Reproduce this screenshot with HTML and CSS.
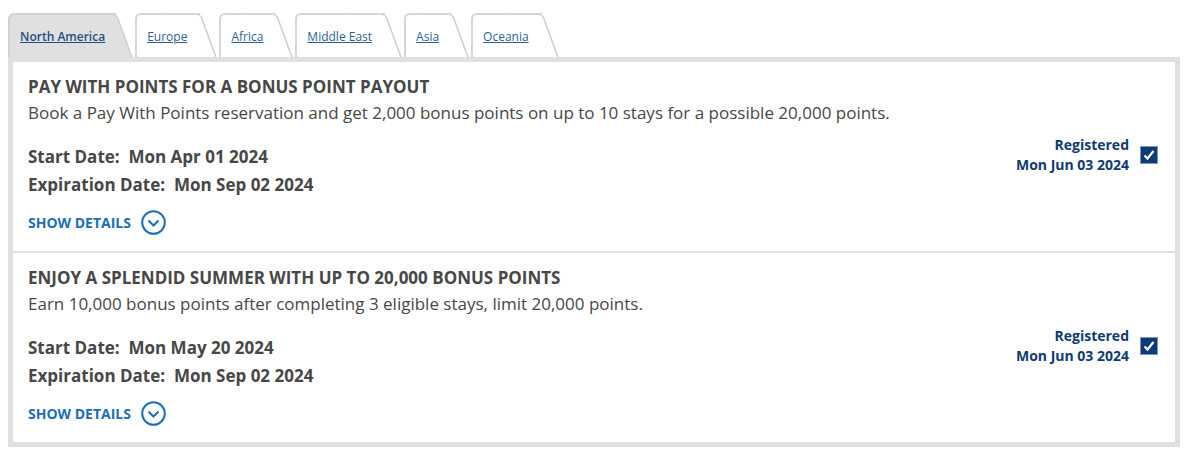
FILE: index.html
```html
<!DOCTYPE html>
<html lang="en">
<head>
    <meta charset="UTF-8">
    <meta name="viewport" content="width=device-width, initial-scale=1.0">
    <link rel="stylesheet" href="styles.css">
    <title>Offers</title>
</head>
<body>
    <div class="region-tabs">
        <a href="#" class="tab active">North America</a>
        <a href="#" class="tab">Europe</a>
        <a href="#" class="tab">Africa</a>
        <a href="#" class="tab">Middle East</a>
        <a href="#" class="tab">Asia</a>
        <a href="#" class="tab">Oceania</a>
    </div>
    <div class="offer-list">
        <div class="offer">
            <div class="offer-info">
                <h3>PAY WITH POINTS FOR A BONUS POINT PAYOUT</h3>
                <p>Book a Pay With Points reservation and get 2,000 bonus points on up to 10 stays for a possible 20,000 points.</p>
                <div class="dates">
                    <div>Start Date:&nbsp; Mon Apr 01 2024</div>
                    <div>Expiration Date:&nbsp; Mon Sep 02 2024</div>
                </div>
                <a href="#" class="show-details">SHOW DETAILS
                    <svg width="25" height="25" viewBox="0 0 25 25"><circle cx="12.5" cy="12.5" r="11.3" fill="none" stroke="#1a6fb8" stroke-width="2"/><polyline points="7.5,10.5 12.5,15.5 17.5,10.5" fill="none" stroke="#1a6fb8" stroke-width="2"/></svg>
                </a>
            </div>
            <div class="registered">
                <div class="reg-text">Registered<br>Mon Jun 03 2024</div>
                <span class="check"><svg width="12" height="12" viewBox="0 0 12 12"><polyline points="1.5,6.5 4.5,9.5 10.5,2" fill="none" stroke="#fff" stroke-width="2.2"/></svg></span>
            </div>
        </div>
        <div class="offer">
            <div class="offer-info">
                <h3>ENJOY A SPLENDID SUMMER WITH UP TO 20,000 BONUS POINTS</h3>
                <p>Earn 10,000 bonus points after completing 3 eligible stays, limit 20,000 points.</p>
                <div class="dates">
                    <div>Start Date:&nbsp; Mon May 20 2024</div>
                    <div>Expiration Date:&nbsp; Mon Sep 02 2024</div>
                </div>
                <a href="#" class="show-details">SHOW DETAILS
                    <svg width="25" height="25" viewBox="0 0 25 25"><circle cx="12.5" cy="12.5" r="11.3" fill="none" stroke="#1a6fb8" stroke-width="2"/><polyline points="7.5,10.5 12.5,15.5 17.5,10.5" fill="none" stroke="#1a6fb8" stroke-width="2"/></svg>
                </a>
            </div>
            <div class="registered">
                <div class="reg-text">Registered<br>Mon Jun 03 2024</div>
                <span class="check"><svg width="12" height="12" viewBox="0 0 12 12"><polyline points="1.5,6.5 4.5,9.5 10.5,2" fill="none" stroke="#fff" stroke-width="2.2"/></svg></span>
            </div>
        </div>
    </div>
</body>
</html>
```

FILE: styles.css
```css
body {
    margin: 8px;
    font-family: "Open Sans", "Liberation Sans", sans-serif;
    color: #474747;
    background: #fff;
}

.region-tabs {
    display: flex;
    gap: 2px;
    padding-top: 5px;
    height: 44px;
}

.tab {
    position: relative;
    z-index: 0;
    display: flex;
    align-items: center;
    padding: 2px 30px 0 12px;
    font-size: 12px;
    color: #2c5f96;
    text-decoration: underline;
}

.tab::before,
.tab::after {
    content: "";
    position: absolute;
    top: 0;
    bottom: 0;
    z-index: -1;
    background: #fff;
    border-top: 2px solid #d6d6d6;
}

.tab::before {
    left: 0;
    right: 17px;
    border-left: 2px solid #d6d6d6;
    border-top-left-radius: 6px;
}

.tab::after {
    right: 0;
    width: 34px;
    border-right: 2px solid #d0d0d0;
    border-top-right-radius: 6px;
    transform: skewX(20deg);
    transform-origin: bottom right;
}

.tab.active {
    padding-right: 28px;
    font-weight: 600;
    color: #1f4f80;
}

.tab.active::before,
.tab.active::after {
    background: #e0e0e0;
    border-color: #d2d2d2;
}

.offer-list {
    border: 5px solid #e0e0e0;
}

.offer {
    display: flex;
    align-items: center;
    padding: 12px 17px 16px 15px;
}

.offer + .offer {
    border-top: 2px solid #e2e2e2;
}

.offer-info {
    flex: 1;
}

.offer h3 {
    margin: 0;
    font-size: 17px;
    line-height: 26px;
    font-weight: bold;
}

.offer p {
    margin: 0;
    font-size: 17px;
    line-height: 26px;
}

.dates {
    margin-top: 17px;
    font-size: 17px;
    font-weight: bold;
    line-height: 28px;
}

.show-details {
    display: flex;
    align-items: center;
    gap: 10px;
    margin-top: 11px;
    height: 25px;
    font-size: 14px;
    font-weight: bold;
    color: #1a6fb8;
    text-decoration: none;
}

.show-details svg {
    display: block;
}

.registered {
    display: flex;
    align-items: center;
    gap: 11px;
}

.reg-text {
    text-align: right;
    font-size: 14px;
    font-weight: bold;
    line-height: 20px;
    color: #0f3b73;
}

.check {
    display: flex;
    align-items: center;
    justify-content: center;
    width: 16px;
    height: 16px;
    background: #0d3b78;
    border: 1px solid #7f95b3;
}
```
